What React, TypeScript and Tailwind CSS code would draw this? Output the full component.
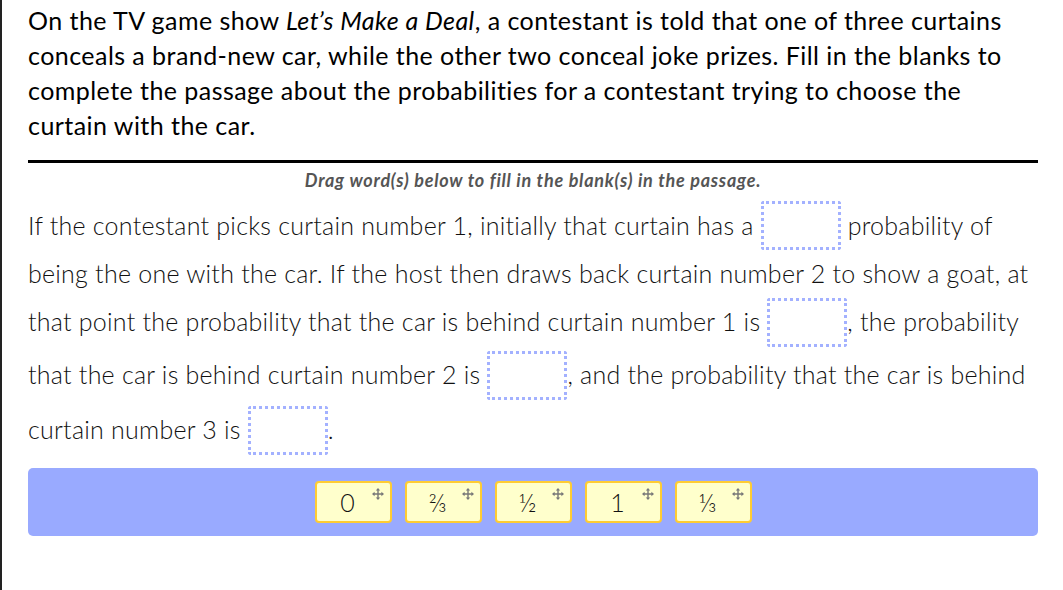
import React from "react";

const Move = () => (
  <svg width="12" height="12" viewBox="0 0 12 12" className="absolute right-[6px] top-[5px]" fill="#777">
    <path d="M6 0 L8.2 2.6 H6.7 V5.3 H9.4 V3.8 L12 6 L9.4 8.2 V6.7 H6.7 V9.4 H8.2 L6 12 L3.8 9.4 H5.3 V6.7 H2.6 V8.2 L0 6 L2.6 3.8 V5.3 H5.3 V2.6 H3.8 Z" />
  </svg>
);

const Blank = ({ w = 80 }: { w?: number }) => (
  <span
    className="inline-block h-[49px] border-[3px] border-dotted border-[#a3b1ff] rounded-[3px] align-middle"
    style={{ width: w }}
  />
);

const Tile = ({ label }: { label: string }) => (
  <div className="relative w-[77px] h-[42px] bg-[#ffffcc] border-2 border-[#ffcc33] rounded-[4px] flex items-center pl-[19px]">
    <span className="w-[24px] text-center text-[25px] text-[#111] font-light leading-none" style={{ fontFamily: "Lato, 'DejaVu Sans', sans-serif" }}>
      {label}
    </span>
    <Move />
  </div>
);

export default function App() {
  const body = "font-['Lato','Liberation_Sans',sans-serif]";
  return (
    <div className="min-h-[590px] w-[1063px] bg-white border-l-2 border-[#222] text-[#111]">
      <div className="pl-[26px] pr-[25px]">
        <div className={`${body} text-[25px] leading-[35px] pt-[3px] tracking-[0.45px] text-black`}>
          On the TV game show <i>Let’s Make a Deal</i>, a contestant is told that one of three curtains
          <br />
          conceals a brand-new car, while the other two conceal joke prizes. Fill in the blanks to
          <br />
          complete the passage about the probabilities for a contestant trying to choose the
          <br />
          curtain with the car.
        </div>
        <div className="mt-[17px] h-[3px] bg-black" />
        <div className={`${body} mt-[7px] text-center text-[18px] leading-[20px] font-bold italic text-[#555] tracking-[0.75px]`}>
          Drag word(s) below to fill in the blank(s) in the passage.
        </div>
        <div className={`${body} mt-[11px] text-[25px] font-light text-[#111] tracking-[0.24px]`}>
          <div className="h-[49px] flex items-center whitespace-pre">
            If the contestant picks curtain number 1, initially that curtain has a <Blank /> probability of
          </div>
          <div className="h-[47px] flex items-center whitespace-pre">
            being the one with the car. If the host then draws back curtain number 2 to show a goat, at
          </div>
          <div className="h-[50px] flex items-center whitespace-pre">
            that point the probability that the car is behind curtain number 1 is <Blank />, the probability
          </div>
          <div className="mt-[3px] h-[50px] flex items-center whitespace-pre">
            that the car is behind curtain number 2 is <Blank />, and the probability that the car is behind
          </div>
          <div className="mt-[5px] h-[50px] flex items-center whitespace-pre">
            curtain number 3 is <Blank />.
          </div>
        </div>
        <div className="mt-[13px] h-[68px] bg-[#99aaff] rounded-[5px] flex items-center justify-center gap-[13px]">
          <Tile label="0" />
          <Tile label="⅔" />
          <Tile label="½" />
          <Tile label="1" />
          <Tile label="⅓" />
        </div>
      </div>
    </div>
  );
}
